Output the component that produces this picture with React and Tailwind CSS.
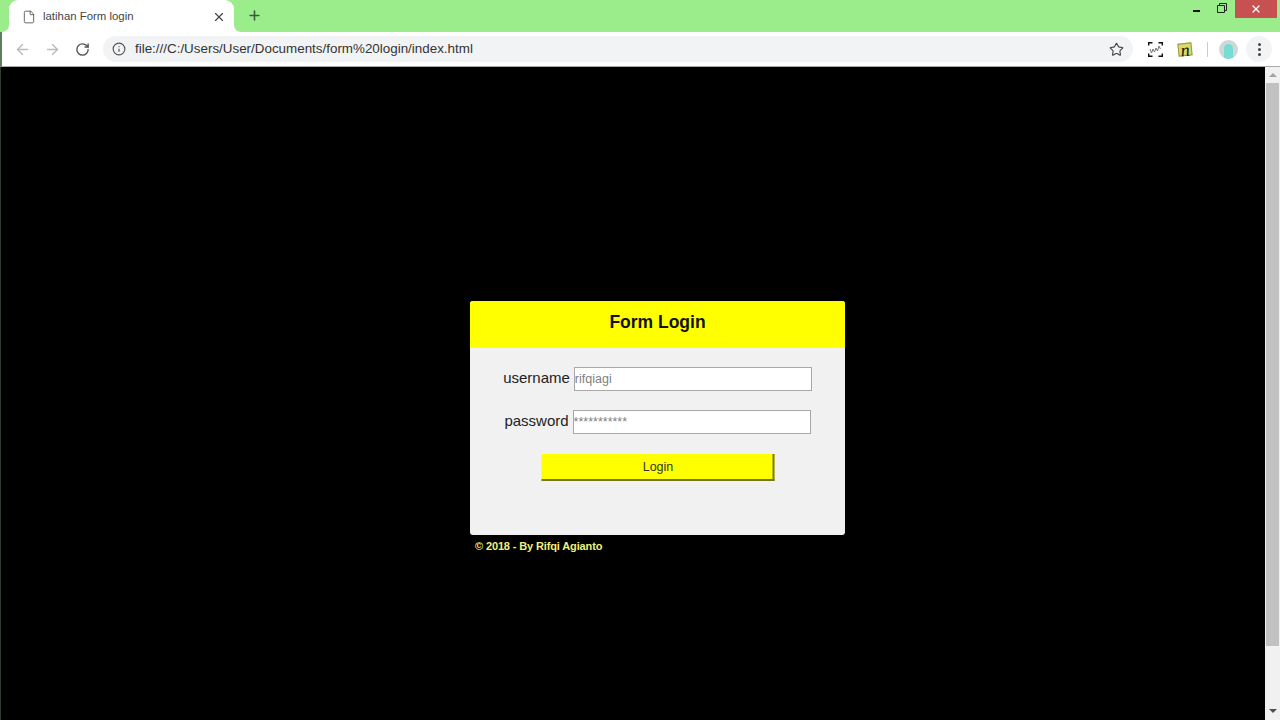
import { ArrowLeft, ArrowRight, RotateCw, Info, Star, X, Plus, File } from "lucide-react";

function RestoreIcon() {
  return (
    <svg width="10" height="10" viewBox="0 0 10 10" fill="none" stroke="#222" strokeWidth="1">
      <path d="M0.5 2.5h7v7h-7z" />
      <path d="M2.5 2.5v-2h7v7h-2" />
    </svg>
  );
}

function ScreenshotExt() {
  return (
    <svg width="15" height="15" viewBox="0 0 15 15" fill="none">
      <path d="M0.7 3.5V0.7H4.5M10.5 0.7H14.3V3.5M14.3 11.5V14.3H10.5M4.5 14.3H0.7V11.5" stroke="#111" strokeWidth="1.4" />
      <path d="M2 7l1.5 4 1.5-4 1.5 3 1.5-4 1.5 3 1.5-5 1.5 3" stroke="#777" strokeWidth="1" />
    </svg>
  );
}

function NoteExt() {
  return (
    <div className="flex h-[13px] w-[14px] -rotate-6 items-center justify-center border border-[#9a9a40] bg-[#d8dc6c] font-['Liberation_Serif',serif] text-[18px] leading-[10px] text-[#111] italic">
      n
    </div>
  );
}

function Avatar() {
  return (
    <div className="flex h-[19px] w-[19px] items-end justify-center overflow-hidden rounded-full bg-[#cfd8d8]">
      <div className="h-[15px] w-[9px] rounded-t-full bg-[#76dcd4]" />
    </div>
  );
}

function BrowserBar() {
  return (
    <div className="shrink-0">
      <div className="flex h-[32px] items-end bg-[#9bed8b] pl-[9px]">
        <div className="relative flex h-[32px] w-[225px] items-center rounded-t-[9px] bg-white pt-[1px] pr-[8px] pl-[13px]">
          <div className="absolute bottom-0 -left-[7px] h-[7px] w-[7px] bg-white">
            <div className="h-full w-full rounded-br-[7px] bg-[#9bed8b]" />
          </div>
          <div className="absolute -right-[7px] bottom-0 h-[7px] w-[7px] bg-white">
            <div className="h-full w-full rounded-bl-[7px] bg-[#9bed8b]" />
          </div>
          <File size={14} strokeWidth={1.5} color="#555" />
          <span className="ml-[7px] flex-1 text-[11.4px] text-[#444]">latihan Form login</span>
          <X size={14} strokeWidth={2} color="#444" />
        </div>
        <div className="ml-[13px] flex h-[33px] items-center">
          <Plus size={15} strokeWidth={2.5} color="#3a5a3a" />
        </div>
        <div className="ml-auto flex h-[32px] items-start pr-[3px]">
          <div className="mt-[10px] h-[2px] w-[7px] bg-[#111]" />
          <div className="mt-[3px] ml-[17px] flex h-[10px] w-[10px] items-center justify-center">
            <RestoreIcon />
          </div>
          <div className="ml-[8px] flex h-[18px] w-[42px] items-center justify-center bg-[#c75050]">
            <X size={12} strokeWidth={2.5} color="#fff" />
          </div>
        </div>
      </div>
      <div className="flex h-[35px] items-center border-b border-l-2 border-b-[#aaa] border-l-[#5d7d5d] bg-white pl-[12px]">
        <ArrowLeft size={17} strokeWidth={2} color="#bbb" />
        <ArrowRight size={17} strokeWidth={2} color="#bbb" className="ml-[13px]" />
        <RotateCw size={15} strokeWidth={2.2} color="#555" className="ml-[14px]" />
        <div className="ml-[13px] flex h-[26px] w-[1030px] items-center rounded-full bg-[#f1f3f4] pr-[9px] pl-[9px]">
          <Info size={14} strokeWidth={2} color="#555" />
          <span className="ml-[9px] flex-1 text-[13.4px] text-[#333]">file:///C:/Users/User/Documents/form%20login/index.html</span>
          <Star size={15} strokeWidth={1.8} color="#444" />
        </div>
        <div className="ml-[15px]">
          <ScreenshotExt />
        </div>
        <div className="ml-[15px]">
          <NoteExt />
        </div>
        <div className="ml-[15px] h-[15px] w-px bg-[#ccc]" />
        <div className="ml-[11px]">
          <Avatar />
        </div>
        <div className="ml-[8px] flex h-[26px] w-[26px] items-center justify-center rounded-full bg-[#f1f3f4]">
          <div className="flex flex-col gap-[2px]">
            <div className="h-[3px] w-[3px] rounded-full bg-[#444]" />
            <div className="h-[3px] w-[3px] rounded-full bg-[#444]" />
            <div className="h-[3px] w-[3px] rounded-full bg-[#444]" />
          </div>
        </div>
      </div>
    </div>
  );
}

function Scrollbar() {
  return (
    <div className="flex w-[15px] shrink-0 flex-col items-center bg-[#f1f1f1] pt-[6px] pb-[7px]">
      <div className="h-0 w-0 border-x-[4px] border-b-[4px] border-x-transparent border-b-[#a3a3a3]" />
      <div className="mt-[6px] h-[563px] w-[13px] bg-[#c1c1c1]" />
      <div className="mt-auto h-0 w-0 border-x-[4px] border-t-[4px] border-x-transparent border-t-[#505050]" />
    </div>
  );
}

function Field({ label, type, placeholder }) {
  return (
    <div className="flex h-[24px] items-start justify-center gap-[4px]">
      <label className="text-[15px] leading-[22px] text-[#222]">{label}</label>
      <input
        type={type}
        placeholder={placeholder}
        className="h-[24px] w-[238px] border border-[#a8a8a8] bg-white px-0 text-[12.5px] outline-none placeholder:text-[#808080]"
      />
    </div>
  );
}

function LoginCard() {
  return (
    <div className="w-[375px]">
      <div className="h-[234px] overflow-hidden rounded-[3px] bg-[#f1f1f1]">
        <h1 className="h-[47px] bg-[#ffff00] text-center text-[17.5px] leading-[42px] font-bold text-[#111]">Form Login</h1>
        <form className="flex flex-col pt-[19px]">
          <Field label="username" type="text" placeholder="rifqiagi" />
          <div className="mt-[19px]">
            <Field label="password" type="text" placeholder="***********" />
          </div>
          <button
            type="button"
            className="mx-auto mt-[20px] h-[27px] w-[233px] translate-x-[0.5px] border-r-2 border-b-2 border-[#77772a] bg-[#ffff00] pt-[2px] pl-[2px] text-[12.5px] text-[#333]"
          >
            Login
          </button>
        </form>
      </div>
      <p className="mt-[4px] pl-[5px] text-[11px] leading-[14px] font-bold tracking-[-0.13px] text-[#f0f07c]">© 2018 - By Rifqi Agianto</p>
    </div>
  );
}

export default function App() {
  return (
    <div className="flex h-[720px] w-[1280px] flex-col overflow-hidden bg-black font-['Liberation_Sans',Arial,sans-serif]">
      <BrowserBar />
      <div className="flex flex-1">
        <main className="flex-1 border-l border-l-[#303a30] pt-[234px] pl-[469px]">
          <LoginCard />
        </main>
        <Scrollbar />
      </div>
    </div>
  );
}
